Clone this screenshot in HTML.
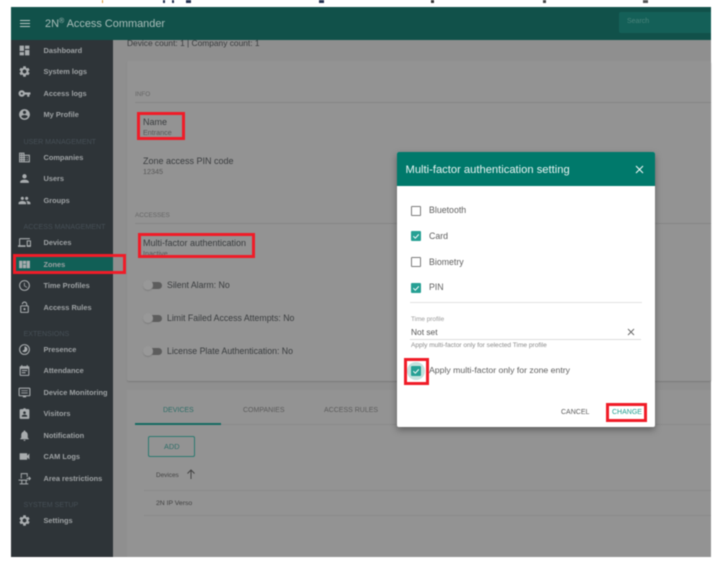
<!DOCTYPE html>
<html>
<head>
<meta charset="utf-8">
<style>
html,body{margin:0;padding:0;background:#fff;}
body{width:728px;height:565px;position:relative;overflow:hidden;font-family:"Liberation Sans",sans-serif;}
.a{position:absolute;}
.t{position:absolute;white-space:nowrap;line-height:12px;}
#soft{position:absolute;left:0;top:0;width:728px;height:565px;filter:blur(0.4px);}
.side{font-size:7.4px;font-weight:bold;color:#9ea2a4;left:43.5px;margin-top:.5px;}
.sec{font-size:7.1px;color:#464f56;left:23.5px;margin-top:.5px;}
.ic{position:absolute;left:18px;width:13px;height:13px;fill:#a8acae;}
.grey{color:#3a3d3f;}
.red{position:absolute;border:3px solid #f01c28;box-sizing:border-box;}
.cb{position:absolute;left:411px;width:10px;height:10px;box-sizing:border-box;border-radius:1px;}
.off{border:1.5px solid #7b7b7b;background:#fff;}
.on{background:#26a094;}
.on svg{position:absolute;left:0;top:0;width:10px;height:10px;}
.sw{position:absolute;left:143px;width:19px;height:10px;}
.sw i{position:absolute;left:4px;top:2px;width:15px;height:6.5px;background:#5d5d5d;border-radius:4px;}
.sw b{position:absolute;left:0;top:0;width:10px;height:10px;background:#989898;border-radius:50%;box-shadow:0 1px 1px #7d7d7d;}
.m{font-size:8.8px;color:#5f5f5f;}
</style>
</head>
<body>
<div id="soft">
<!-- stray descenders above the screenshot -->
<div class="a" style="left:102px;top:0;width:1px;height:3px;background:#d8952f"></div>
<div class="a" style="left:163px;top:0;width:2px;height:3px;background:#23304f"></div>
<div class="a" style="left:172px;top:0;width:2px;height:3px;background:#23304f"></div>
<div class="a" style="left:186px;top:0;width:5px;height:2.5px;background:#23304f"></div>
<div class="a" style="left:319px;top:0;width:5px;height:2.5px;background:#23304f"></div>
<div class="a" style="left:431px;top:0;width:3px;height:3px;background:#333"></div>
<div class="a" style="left:543px;top:0;width:3px;height:3px;background:#444"></div>
<div class="a" style="left:643px;top:0;width:5px;height:2.5px;background:#555"></div>

<!-- main -->
<div class="a" style="left:11px;top:7px;width:700px;height:550px;background:#8f8f8f;overflow:hidden"></div>
<div class="t" style="left:127px;top:37px;font-size:8.4px;color:#3a3c3e">Device count: 1 | Company count: 1</div>
<!-- cards -->
<div class="a" style="left:127px;top:61px;width:584px;height:320px;background:#939393;border-radius:2px;box-shadow:0 1px 1px #7b7b7b"></div>
<div class="a" style="left:127px;top:390px;width:584px;height:167px;background:#939393"></div>
<div class="a" style="left:135px;top:102px;width:576px;height:1px;background:#868686"></div>
<div class="a" style="left:135px;top:223px;width:576px;height:1px;background:#868686"></div>
<div class="t" style="left:135px;top:89px;font-size:6.4px;color:#666">INFO</div>
<div class="t" style="left:135px;top:210px;font-size:6.4px;color:#666">ACCESSES</div>
<div class="t grey" style="left:143px;top:116px;font-size:9px">Name</div>
<div class="t" style="left:143px;top:127px;font-size:7.2px;color:#575757">Entrance</div>
<div class="t grey" style="left:143px;top:154.500px;font-size:9px">Zone access PIN code</div>
<div class="t" style="left:143px;top:166px;font-size:7.2px;color:#575757">12345</div>
<div class="t grey" style="left:143px;top:237px;font-size:9px">Multi-factor authentication</div>
<div class="t" style="left:143px;top:247.500px;font-size:7.2px;color:#575757">Inactive</div>
<div class="sw" style="top:280px"><i></i><b></b></div>
<div class="t grey" style="left:167px;top:278.500px;font-size:8.75px">Silent Alarm: No</div>
<div class="sw" style="top:313px"><i></i><b></b></div>
<div class="t grey" style="left:167px;top:312px;font-size:8.75px">Limit Failed Access Attempts: No</div>
<div class="sw" style="top:346px"><i></i><b></b></div>
<div class="t grey" style="left:167px;top:345px;font-size:8.75px">License Plate Authentication: No</div>

<!-- tabs -->
<div class="t" style="left:163px;top:405px;font-size:7px;color:#2f6e68">DEVICES</div>
<div class="t" style="left:243px;top:405px;font-size:7px;color:#5c5c5c">COMPANIES</div>
<div class="t" style="left:324px;top:405px;font-size:7px;color:#5c5c5c">ACCESS RULES</div>
<div class="a" style="left:135px;top:424px;width:576px;height:1px;background:#8a8a8a"></div>
<div class="a" style="left:135px;top:423px;width:86px;height:1.5px;background:#176b62"></div>
<div class="a" style="left:148px;top:436px;width:47px;height:21px;box-sizing:border-box;border:1px solid #2c7a70;border-radius:2px"></div>
<div class="t" style="left:164px;top:441px;font-size:7.4px;color:#2f6e68">ADD</div>
<div class="t" style="left:156px;top:470px;font-size:6.4px;color:#444">Devices</div>
<svg class="a" style="left:185px;top:468px;width:12px;height:12px" viewBox="0 0 12 12"><path d="M6 11V2M2.500 5.500L6 2l3.500 3.500" fill="none" stroke="#444" stroke-width="1"/></svg>
<div class="a" style="left:144px;top:490px;width:567px;height:1px;background:#8a8a8a"></div>
<div class="t" style="left:156px;top:498px;font-size:6.800px;color:#3f3f3f">2N IP Verso</div>
<div class="a" style="left:144px;top:515px;width:567px;height:1px;background:#8a8a8a"></div>

<!-- header -->
<div class="a" style="left:11px;top:7px;width:700px;height:33px;background:#11514a"></div>
<div class="a" style="left:20px;top:20px;width:10px;height:1.100px;background:#b9c9c6"></div>
<div class="a" style="left:20px;top:23px;width:10px;height:1.100px;background:#b9c9c6"></div>
<div class="a" style="left:20px;top:26px;width:10px;height:1.100px;background:#b9c9c6"></div>
<div class="t" style="left:45px;top:17.500px;font-size:10.950px;color:#a9bdb9">2N<sup style="font-size:7px;line-height:0;vertical-align:4px">®</sup> Access Commander</div>
<div class="a" style="left:619px;top:12px;width:92px;height:21px;background:#146058;border-radius:2px 0 0 2px"></div>
<div class="t" style="left:627px;top:16px;font-size:7px;color:#4a837b">Search</div>

<!-- sidebar -->
<div class="a" style="left:11px;top:40px;width:102px;height:517px;background:#2e3438"></div>
<div class="a" style="left:13px;top:255px;width:100px;height:18px;background:#115f56"></div>

<svg class="ic" style="top:44px" viewBox="0 0 24 24"><path d="M3 13h8V3H3v10zm0 8h8v-6H3v6zm10 0h8V11h-8v10zm0-18v6h8V3h-8z"/></svg>
<div class="t side" style="top:44px">Dashboard</div>
<svg class="ic" style="top:65px" viewBox="0 0 24 24"><path d="M19.140 12.940c.04-.3.06-.61.06-.94 0-.32-.02-.64-.07-.94l2.030-1.580c.18-.14.23-.41.12-.61l-1.920-3.320c-.12-.22-.37-.29-.59-.22l-2.390.96c-.5-.38-1.030-.7-1.620-.94l-.36-2.540c-.04-.24-.24-.41-.48-.41h-3.840c-.24 0-.43.17-.47.41l-.36 2.540c-.59.24-1.130.57-1.620.94l-2.390-.96c-.22-.08-.47 0-.59.22L2.740 8.870c-.12.21-.08.47.12.61l2.030 1.580c-.05.3-.09.63-.09.94s.02.64.07.94l-2.030 1.580c-.18.14-.23.41-.12.61l1.920 3.320c.12.22.37.29.59.22l2.390-.96c.5.38 1.030.7 1.620.94l.36 2.540c.05.24.24.41.48.41h3.840c.24 0 .44-.17.47-.41l.36-2.540c.59-.24 1.130-.56 1.620-.94l2.390.96c.22.08.47 0 .59-.22l1.920-3.320c.12-.22.07-.47-.12-.61l-2.010-1.580zM12 15.600c-1.980 0-3.600-1.620-3.600-3.600s1.620-3.600 3.600-3.600 3.600 1.620 3.600 3.600-1.620 3.600-3.600 3.600z"/></svg>
<div class="t side" style="top:65.500px">System logs</div>
<svg class="ic" style="top:87px" viewBox="0 0 24 24"><path d="M12.650 10C11.830 7.670 9.610 6 7 6c-3.310 0-6 2.690-6 6s2.690 6 6 6c2.610 0 4.830-1.670 5.650-4H17v4h4v-4h2v-4H12.650zM7 14c-1.100 0-2-.9-2-2s.9-2 2-2 2 .9 2 2-.9 2-2 2z"/></svg>
<div class="t side" style="top:87px">Access logs</div>
<svg class="ic" style="top:108px" viewBox="0 0 24 24"><path d="M12 2C6.480 2 2 6.480 2 12s4.480 10 10 10 10-4.480 10-10S17.520 2 12 2zm0 3c1.660 0 3 1.340 3 3s-1.340 3-3 3-3-1.340-3-3 1.340-3 3-3zm0 14.200c-2.500 0-4.710-1.280-6-3.220.03-1.990 4-3.080 6-3.080 1.990 0 5.970 1.090 6 3.080-1.290 1.940-3.500 3.220-6 3.220z"/></svg>
<div class="t side" style="top:108.500px">My Profile</div>

<div class="t sec" style="top:135px">USER MANAGEMENT</div>
<svg class="ic" style="top:151px" viewBox="0 0 24 24"><path d="M12 7V3H2v18h20V7H12zM6 19H4v-2h2v2zm0-4H4v-2h2v2zm0-4H4V9h2v2zm0-4H4V5h2v2zm4 12H8v-2h2v2zm0-4H8v-2h2v2zm0-4H8V9h2v2zm0-4H8V5h2v2zm10 12h-8v-2h2v-2h-2v-2h2v-2h-2V9h8v10zm-2-8h-2v2h2v-2zm0 4h-2v2h2v-2z"/></svg>
<div class="t side" style="top:151px">Companies</div>
<svg class="ic" style="top:172px" viewBox="0 0 24 24"><path d="M12 12c2.210 0 4-1.790 4-4s-1.790-4-4-4-4 1.790-4 4 1.790 4 4 4zm0 2c-2.670 0-8 1.340-8 4v2h16v-2c0-2.660-5.330-4-8-4z"/></svg>
<div class="t side" style="top:172.500px">Users</div>
<svg class="ic" style="top:194px" viewBox="0 0 24 24"><path d="M16 11c1.660 0 2.990-1.340 2.990-3S17.660 5 16 5c-1.660 0-3 1.340-3 3s1.340 3 3 3zm-8 0c1.660 0 2.990-1.340 2.990-3S9.660 5 8 5C6.340 5 5 6.340 5 8s1.340 3 3 3zm0 2c-2.330 0-7 1.170-7 3.500V19h14v-2.500c0-2.330-4.670-3.500-7-3.500zm8 0c-.29 0-.62.02-.97.05 1.160.84 1.970 1.970 1.970 3.450V19h6v-2.500c0-2.330-4.670-3.500-7-3.500z"/></svg>
<div class="t side" style="top:194px">Groups</div>

<div class="t sec" style="top:220px">ACCESS MANAGEMENT</div>
<svg class="ic" style="top:236px" viewBox="0 0 24 24"><path d="M4 6h18V4H4c-1.100 0-2 .9-2 2v11H0v3h14v-3H4V6zm19 2h-6c-.55 0-1 .45-1 1v10c0 .55.45 1 1 1h6c.55 0 1-.45 1-1V9c0-.55-.45-1-1-1zm-1 9h-4v-7h4v7z"/></svg>
<div class="t side" style="top:236px">Devices</div>
<svg class="ic" style="top:258px" viewBox="0 0 24 24"><path d="M2 5h6v14H2zM9 5h6v6H9zM9 12h6v7H9zM16 5h6v14h-6z"/></svg>
<div class="t side" style="top:258px">Zones</div>
<svg class="ic" style="top:279px" viewBox="0 0 24 24"><path d="M11.990 2C6.470 2 2 6.480 2 12s4.470 10 9.990 10C17.520 22 22 17.520 22 12S17.520 2 11.990 2zM12 20c-4.420 0-8-3.580-8-8s3.580-8 8-8 8 3.580 8 8-3.580 8-8 8zm.5-13H11v6l5.250 3.150.75-1.230-4.500-2.670z"/></svg>
<div class="t side" style="top:279.500px">Time Profiles</div>
<svg class="ic" style="top:301px" viewBox="0 0 24 24"><path d="M12 17c1.100 0 2-.9 2-2s-.9-2-2-2-2 .9-2 2 .9 2 2 2zm6-9h-1V6c0-2.760-2.240-5-5-5S7 3.240 7 6h1.900c0-1.710 1.390-3.100 3.100-3.100 1.710 0 3.100 1.390 3.100 3.100v2H6c-1.100 0-2 .9-2 2v10c0 1.100.9 2 2 2h12c1.100 0 2-.9 2-2V10c0-1.100-.9-2-2-2zm0 12H6V10h12v10z"/></svg>
<div class="t side" style="top:301px">Access Rules</div>

<div class="t sec" style="top:327px">EXTENSIONS</div>
<svg class="ic" style="top:343px" viewBox="0 0 24 24"><path d="M12 2a10 10 0 1 0 0 20 10 10 0 0 0 0-20zm0 18a8 8 0 1 1 0-16 8 8 0 0 1 0 16zM12 6v6l-4 3a5.500 5.500 0 0 0 9.500-3A6 6 0 0 0 12 6z"/></svg>
<div class="t side" style="top:343px">Presence</div>
<svg class="ic" style="top:364px" viewBox="0 0 24 24"><path d="M19 4h-1V2h-2v2H8V2H6v2H5c-1.100 0-2 .9-2 2v14c0 1.100.9 2 2 2h14c1.100 0 2-.9 2-2V6c0-1.100-.9-2-2-2zm0 16H5V9h14v11zM7 11h10v2H7zm0 4h7v2H7z"/></svg>
<div class="t side" style="top:364.500px">Attendance</div>
<svg class="ic" style="top:386px" viewBox="0 0 24 24"><path d="M21 3H3c-1.100 0-2 .9-2 2v12c0 1.100.9 2 2 2h6v2h6v-2h6c1.100 0 2-.9 2-2V5c0-1.100-.9-2-2-2zm0 14H3V5h18v12zM6 8h12v1.500H6zm0 4h12v1.500H6z"/></svg>
<div class="t side" style="top:386px">Device Monitoring</div>
<svg class="ic" style="top:407px" viewBox="0 0 24 24"><path d="M19 4h-4.200C14.400 2.800 13.300 2 12 2s-2.400.8-2.800 2H5c-1.100 0-2 .9-2 2v14c0 1.100.9 2 2 2h14c1.100 0 2-.9 2-2V6c0-1.100-.9-2-2-2zm-7 4c1.400 0 2.500 1.100 2.500 2.500S13.400 13 12 13s-2.500-1.100-2.500-2.500S10.600 8 12 8zm5 10H7v-1.500c0-1.700 3.300-2.500 5-2.500s5 .8 5 2.500V18z"/></svg>
<div class="t side" style="top:407.500px">Visitors</div>
<svg class="ic" style="top:429px" viewBox="0 0 24 24"><path d="M12 22c1.100 0 2-.9 2-2h-4c0 1.100.9 2 2 2zm6-6v-5c0-3.070-1.630-5.640-4.500-6.320V4c0-.83-.67-1.500-1.500-1.500s-1.500.67-1.500 1.500v.68C7.640 5.360 6 7.920 6 11v5l-2 2v1h16v-1l-2-2z"/></svg>
<div class="t side" style="top:429px">Notification</div>
<svg class="ic" style="top:450px" viewBox="0 0 24 24"><path d="M17 10.500V7c0-.55-.45-1-1-1H4c-.55 0-1 .45-1 1v10c0 .55.45 1 1 1h12c.55 0 1-.45 1-1v-3.500l4 4v-11l-4 4z"/></svg>
<div class="t side" style="top:450.500px">CAM Logs</div>
<svg class="ic" style="top:472px" viewBox="0 0 24 24"><path d="M6 12V3h11v6M16 12h7M20 9l3 3-3 3M1 15h17M7 15v7M15 15v7M3 22h16" fill="none" stroke="#a8acae" stroke-width="1.800"/></svg>
<div class="t side" style="top:472px">Area restrictions</div>

<div class="t sec" style="top:498px">SYSTEM SETUP</div>
<svg class="ic" style="top:514px" viewBox="0 0 24 24"><path d="M19.140 12.940c.04-.3.06-.61.06-.94 0-.32-.02-.64-.07-.94l2.030-1.580c.18-.14.23-.41.12-.61l-1.920-3.320c-.12-.22-.37-.29-.59-.22l-2.390.96c-.5-.38-1.030-.7-1.620-.94l-.36-2.540c-.04-.24-.24-.41-.48-.41h-3.840c-.24 0-.43.17-.47.41l-.36 2.540c-.59.24-1.130.57-1.620.94l-2.390-.96c-.22-.08-.47 0-.59.22L2.740 8.870c-.12.21-.08.47.12.61l2.030 1.580c-.05.3-.09.63-.09.94s.02.64.07.94l-2.030 1.580c-.18.14-.23.41-.12.61l1.920 3.320c.12.22.37.29.59.22l2.390-.96c.5.38 1.030.7 1.620.94l.36 2.540c.05.24.24.41.48.41h3.840c.24 0 .44-.17.47-.41l.36-2.540c.59-.24 1.130-.56 1.620-.94l2.390.96c.22.08.47 0 .59-.22l1.920-3.320c.12-.22.07-.47-.12-.61l-2.010-1.580zM12 15.600c-1.980 0-3.600-1.620-3.600-3.600s1.620-3.600 3.600-3.600 3.600 1.620 3.600 3.600-1.620 3.600-3.600 3.600z"/></svg>
<div class="t side" style="top:514.500px">Settings</div>

<!-- modal -->
<div class="a" style="left:397px;top:152px;width:258px;height:275px;background:#fff;border-radius:2px;box-shadow:0 3px 7px rgba(0,0,0,.35)"></div>
<div class="a" style="left:397px;top:152px;width:258px;height:34px;background:#00796b;border-radius:2px 2px 0 0"></div>
<div class="t" style="left:405.500px;top:164px;font-size:11.200px;color:#e8f4f2">Multi-factor authentication setting</div>
<svg class="a" style="left:635px;top:165px;width:9px;height:9px" viewBox="0 0 9 9"><path d="M1 1l7 7M8 1l-7 7" stroke="#eef6f5" stroke-width="1.100" fill="none"/></svg>

<div class="cb off" style="top:206px"></div>
<div class="t m" style="left:429px;top:204px">Bluetooth</div>
<div class="cb on" style="top:231px"><svg viewBox="0 0 10 10"><path d="M2.300 5.200l2 2L7.800 3.400" stroke="#fff" stroke-width="1" fill="none"/></svg></div>
<div class="t m" style="left:429px;top:230px">Card</div>
<div class="cb off" style="top:257px"></div>
<div class="t m" style="left:429px;top:255.500px">Biometry</div>
<div class="cb on" style="top:283px"><svg viewBox="0 0 10 10"><path d="M2.300 5.200l2 2L7.800 3.400" stroke="#fff" stroke-width="1" fill="none"/></svg></div>
<div class="t m" style="left:429px;top:281px">PIN</div>
<div class="a" style="left:410px;top:302px;width:232px;height:1px;background:#e2e2e2"></div>

<div class="t" style="left:411px;top:314px;font-size:6.400px;color:#9a9a9a">Time profile</div>
<div class="t" style="left:411px;top:326px;font-size:8.400px;color:#555">Not set</div>
<svg class="a" style="left:627px;top:328px;width:8px;height:8px" viewBox="0 0 8 8"><path d="M1 1l6 6M7 1l-6 6" stroke="#666" stroke-width=".9" fill="none"/></svg>
<div class="a" style="left:410px;top:339px;width:231px;height:1px;background:#dcdcdc"></div>
<div class="t" style="left:411px;top:340px;font-size:6.550px;color:#8a8a8a">Apply multi-factor only for selected Time profile</div>

<div class="a" style="left:407px;top:362px;width:18px;height:18px;border-radius:50%;background:#c4e2de"></div>
<div class="cb on" style="top:366px"><svg viewBox="0 0 10 10"><path d="M2.300 5.200l2 2L7.800 3.400" stroke="#fff" stroke-width="1" fill="none"/></svg></div>
<div class="t m" style="left:429px;top:364px;font-size:8.700px">Apply multi-factor only for zone entry</div>
<div class="t" style="left:561px;top:407px;font-size:7px;color:#5c5c5c">CANCEL</div>
<div class="t" style="left:612px;top:407px;font-size:7px;color:#1f9d8f">CHANGE</div>

<!-- red highlight boxes -->
<div class="red" style="left:137px;top:112px;width:48px;height:28px"></div>
<div class="red" style="left:138px;top:233px;width:117px;height:25px"></div>
<div class="red" style="left:13px;top:254px;width:113px;height:20px"></div>
<div class="red" style="left:404px;top:358px;width:25px;height:27px"></div>
<div class="red" style="left:606px;top:403px;width:41px;height:19px"></div>
</div>
</body>
</html>
